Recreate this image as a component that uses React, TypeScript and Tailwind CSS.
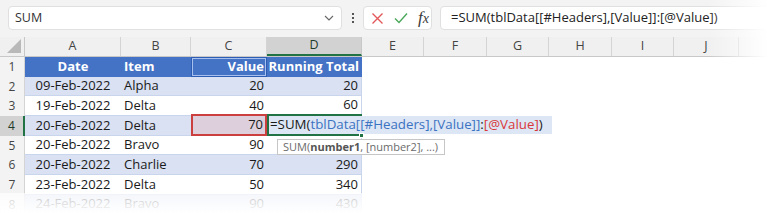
import React from "react";

const cols = [
  { l: "A", w: 96 },
  { l: "B", w: 70 },
  { l: "C", w: 76 },
  { l: "D", w: 95 },
  { l: "E", w: 62 },
  { l: "F", w: 63 },
  { l: "G", w: 62 },
  { l: "H", w: 63 },
  { l: "I", w: 62 },
  { l: "J", w: 65 },
  { l: "", w: 60 },
];

type Row = { n: number; d: string; i: string; v: string; t: string };
const rows: Row[] = [
  { n: 2, d: "09-Feb-2022", i: "Alpha", v: "20", t: "20" },
  { n: 3, d: "19-Feb-2022", i: "Delta", v: "40", t: "60" },
  { n: 4, d: "20-Feb-2022", i: "Delta", v: "70", t: "" },
  { n: 5, d: "20-Feb-2022", i: "Bravo", v: "90", t: "" },
  { n: 6, d: "20-Feb-2022", i: "Charlie", v: "70", t: "290" },
  { n: 7, d: "23-Feb-2022", i: "Delta", v: "50", t: "340" },
  { n: 8, d: "24-Feb-2022", i: "Bravo", v: "90", t: "430" },
];

function Empties() {
  return (
    <>
      <div className="w-[62px] shrink-0" />
      <div className="w-[63px] shrink-0" />
      <div className="w-[62px] shrink-0" />
      <div className="w-[63px] shrink-0" />
      <div className="w-[62px] shrink-0" />
      <div className="w-[65px] shrink-0" />
    </>
  );
}

export default function App() {
  return (
    <div className="relative w-[768px] h-[213px] overflow-hidden bg-white font-['Open_Sans',sans-serif] text-[#1a1a1a]">
      {/* formula bar */}
      <div className="h-[37px] bg-[#f3f3f3] flex items-start pt-[6px] pl-[8px]">
        <div className="w-[334px] h-[24px] bg-white border border-[#e0e0e0] rounded-[4px] flex items-center pl-[6px] pr-[6px] justify-between">
          <span className="text-[12.5px] text-[#333]">SUM</span>
          <svg width="10" height="6" viewBox="0 0 10 6" className="mr-[1px]">
            <path d="M1 1 L5 5 L9 1" fill="none" stroke="#666" strokeWidth="1.1" />
          </svg>
        </div>
        <div className="w-[21px] h-[24px] flex flex-col items-center justify-center gap-[2px]">
          <div className="w-[2px] h-[2px] bg-[#555]" />
          <div className="w-[2px] h-[2px] bg-[#555]" />
          <div className="w-[2px] h-[2px] bg-[#555]" />
        </div>
        <div className="w-[69px] h-[24px] bg-white border border-[#e0e0e0] rounded-[4px] flex items-center pl-[7px] gap-[10px]">
          <svg width="13" height="13" viewBox="0 0 13 13">
            <path d="M1.5 1.5 L11.5 11.5 M11.5 1.5 L1.5 11.5" stroke="#e5585a" strokeWidth="1.4" fill="none" />
          </svg>
          <svg width="14" height="12" viewBox="0 0 14 12">
            <path d="M1 6.5 L5 10.5 L13 1.5" stroke="#4aa85a" strokeWidth="1.4" fill="none" />
          </svg>
          <span className="font-['Liberation_Serif',serif] italic text-[17px] leading-none text-[#3a3a3a] -mt-[2px]">
            f<span className="text-[14px]">x</span>
          </span>
        </div>
        <div className="ml-[8px] flex-1 h-[24px] bg-white border border-[#e0e0e0] rounded-l-[4px] flex items-center pl-[10px]">
          <span className="text-[13px] text-[#222] whitespace-nowrap">=SUM(tblData[[#Headers],[Value]]:[@Value])</span>
        </div>
      </div>

      {/* column headers */}
      <div className="flex h-[20px] bg-[#f0f0f0] border-b border-[#c8c8c8] text-[12.5px] text-[#444]">
        <div className="w-[25px] shrink-0 border-r border-[#c8c8c8] relative">
          <svg width="14" height="14" viewBox="0 0 14 14" className="absolute right-[3px] bottom-[3px]">
            <path d="M14 0 L14 14 L0 14 Z" fill="#b9b9b9" />
          </svg>
        </div>
        {cols.map((c) =>
          c.l === "D" ? (
            <div
              key={c.l}
              style={{ width: c.w }}
              className="shrink-0 flex items-center justify-center bg-[#d2d2d2] border-b-2 border-[#217346] border-r border-r-[#c8c8c8] text-[#1f3b2a]"
            >
              {c.l}
            </div>
          ) : (
            <div
              key={c.l + c.w}
              style={{ width: c.w }}
              className="shrink-0 flex items-center justify-center border-r border-[#d4d4d4]"
            >
              {c.l}
            </div>
          )
        )}
      </div>

      {/* row 1 header of table */}
      <div className="flex h-[19.7px] text-[13px]">
        <div className="w-[25px] shrink-0 bg-[#f3f3f3] flex items-center justify-center text-[12px] text-[#444] border-r border-[#d4d4d4]">1</div>
        <div className="w-[96px] shrink-0 bg-[#4472c4] text-white font-bold flex items-center justify-center">Date</div>
        <div className="w-[70px] shrink-0 bg-[#4472c4] text-white font-bold flex items-center pl-[3px]">Item</div>
        <div className="w-[76px] shrink-0 bg-[#4472c4] text-white font-bold flex items-center justify-end pr-[2px] border border-[#2d5cb4] shadow-[inset_0_0_0_1px_#a8c0ee]">Value</div>
        <div className="w-[95px] shrink-0 bg-[#4472c4] text-white font-bold flex items-center justify-end pr-[3px]">Running Total</div>
        <Empties />
      </div>

      {rows.map((r) => {
        const band = r.n % 2 === 0;
        const bg = band ? "bg-[#d9e1f2]" : "bg-white";
        const sel = r.n === 4;
        return (
          <div key={r.n} className="flex h-[19.7px] text-[13px]">
            <div
              className={
                "w-[25px] shrink-0 flex items-center justify-center text-[12px] " +
                (sel
                  ? "bg-[#d2d2d2] border-r-2 border-[#217346] text-[#1f3b2a]"
                  : "bg-[#f3f3f3] border-r border-[#d4d4d4] text-[#444]")
              }
            >
              {r.n}
            </div>
            <div className={"w-[96px] shrink-0 flex items-center justify-center border-b border-[#c9d5ec] " + bg}>{r.d}</div>
            <div className={"w-[70px] shrink-0 flex items-center pl-[3px] border-b border-[#c9d5ec] " + bg}>{r.i}</div>
            {sel ? (
              <div className="w-[76px] shrink-0 flex items-center justify-end pr-[2px] bg-[#ddd0dc] border-2 border-[#cc3f3f] -mt-[2px] h-[21.7px]">
                {r.v}
              </div>
            ) : (
              <div className={"w-[76px] shrink-0 flex items-center justify-end pr-[3px] border-b border-[#c9d5ec] " + bg}>{r.v}</div>
            )}
            {sel ? (
              <div className="w-[95px] shrink-0 relative -mt-[2px] h-[21.7px] border-2 border-[#217346] bg-[#d9e1f2]">
                <div className="absolute left-0 top-0 h-full w-[283px] bg-[#dde6f4] flex items-center pl-[1px] whitespace-nowrap text-[13.3px] z-10">
                  <span>=SUM(</span>
                  <span className="text-[#3b73c2]">tblData[[#Headers],[Value]]</span>
                  <span>:</span>
                  <span className="text-[#d9383a]">[@Value]</span>
                  <span>)</span>
                </div>
                <div className="absolute -right-[4px] -bottom-[4px] w-[5px] h-[5px] bg-[#217346] border border-white z-20" />
              </div>
            ) : (
              <div className={"w-[95px] shrink-0 flex items-center justify-end pr-[3px] border-b border-r border-[#c9d5ec] " + bg + (r.n === 3 ? " border-b-2 border-b-[#217346]" : "")}>
                {r.t}
              </div>
            )}
            <Empties />
          </div>
        );
      })}

      {/* tooltip */}
      <div className="absolute left-[277px] top-[139px] w-[168px] h-[16px] bg-white border border-[#c6c6c6] flex items-center pl-[5px] text-[11px] text-[#6b6b6b] whitespace-nowrap z-30">
        SUM(<span className="font-bold text-[#555]">number1</span>, [number2], ...)
      </div>

      {/* fades */}
      <div className="absolute right-0 top-0 w-[60px] h-[60px] bg-gradient-to-r from-transparent to-white z-40" />
      <div className="absolute left-0 bottom-0 w-full h-[20px] bg-gradient-to-b from-white/70 to-white z-40" />
    </div>
  );
}
